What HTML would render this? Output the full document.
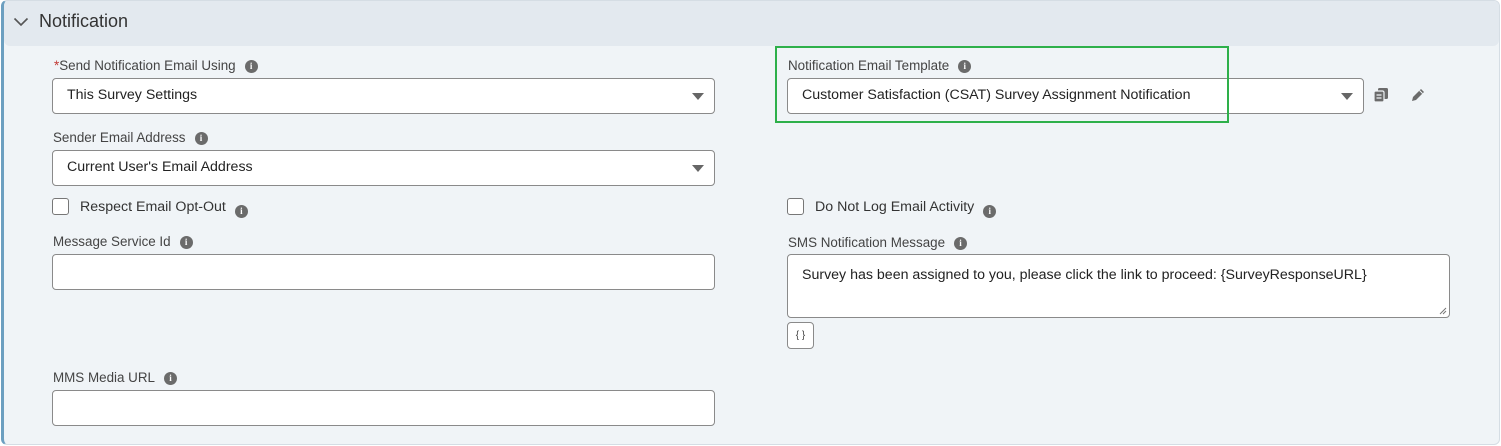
<!DOCTYPE html>
<html><head><style>
*{box-sizing:border-box;margin:0;padding:0}
body{width:1501px;height:446px;background:#fff;font-family:"Liberation Sans",sans-serif;position:relative;overflow:hidden;color:#3e3e3c}
.card{position:absolute;left:1px;top:0;width:1499px;height:445px;background:#f0f4f7;border:1px solid #d5dde4;border-left:3px solid #6c9fc0;border-radius:6px;overflow:hidden}
.hdr{position:absolute;left:0;top:0;right:0;height:45px;background:#e3e9ef;border-radius:0 0 6px 6px}
.abs{position:absolute}
.lbl{position:absolute;font-size:13.4px;color:#444;white-space:nowrap;line-height:16px}
.info{display:inline-block;width:13px;height:13px;border-radius:50%;background:#6b6b6b;color:#fff;font-size:9px;font-weight:bold;text-align:center;line-height:13px;vertical-align:1px;margin-left:9px;font-family:"Liberation Serif",serif}
.inp{position:absolute;background:#fff;border:1px solid #8a8a8a;border-radius:4px;font-size:14.2px;color:#222;padding-left:14px;line-height:33px;white-space:nowrap}
.arr{position:absolute;right:10px;top:14px;width:0;height:0;border-left:6px solid transparent;border-right:6px solid transparent;border-top:7px solid #666}
.cb{position:absolute;width:17px;height:17px;background:#fff;border:1px solid #777;border-radius:3px}
</style></head><body>
<div class="card">
<div class="hdr"></div>
</div>
<svg class="abs" style="left:13px;top:16px" width="16" height="12"><path d="M1.5 2.5 L8 9 L14.5 2.5" fill="none" stroke="#555" stroke-width="1.6"/></svg>
<div class="abs" style="left:39px;top:10px;font-size:18px;color:#333;line-height:22px">Notification</div>

<div class="lbl" style="left:54px;top:58px"><span style="color:#c23934">*</span>Send Notification Email Using<span class="info">i</span></div>
<div class="inp" style="left:52px;top:78px;width:663px;height:36px">This Survey Settings<div class="arr"></div></div>

<div class="lbl" style="left:53px;top:130px">Sender Email Address<span class="info">i</span></div>
<div class="inp" style="left:52px;top:150px;width:663px;height:36px">Current User's Email Address<div class="arr"></div></div>

<div class="cb" style="left:52px;top:198px"></div>
<div class="lbl" style="left:80px;top:199px;font-size:14.2px;color:#333">Respect Email Opt-Out<span class="info" style="vertical-align:-3px">i</span></div>

<div class="lbl" style="left:53px;top:234px">Message Service Id<span class="info">i</span></div>
<div class="inp" style="left:52px;top:254px;width:663px;height:36px"></div>

<div class="lbl" style="left:53px;top:370px">MMS Media URL<span class="info">i</span></div>
<div class="inp" style="left:52px;top:390px;width:663px;height:36px"></div>

<div class="lbl" style="left:788px;top:58px">Notification Email Template<span class="info">i</span></div>
<div class="inp" style="left:787px;top:78px;width:577px;height:36px">Customer Satisfaction (CSAT) Survey Assignment Notification<div class="arr"></div></div>
<div class="abs" style="left:775px;top:46px;width:454px;height:77px;border:2px solid #2eb04a"></div>

<svg class="abs" style="left:1373px;top:87px" width="16" height="16"><rect x="5" y="1" width="10" height="11" rx="1.5" fill="#6b6b6b"/><rect x="1" y="4" width="10" height="11" rx="1.5" fill="#6b6b6b" stroke="#f0f4f7" stroke-width="1.2"/><path d="M3.5 8h5M3.5 11h5" stroke="#f0f4f7" stroke-width="1.2"/></svg>
<svg class="abs" style="left:1410px;top:87px" width="16" height="16"><path d="M2 14 L3 10 L11 2 L14 5 L6 13 Z" fill="#6b6b6b"/><path d="M9.5 3.5 L12.5 6.5" stroke="#f0f4f7" stroke-width="1"/></svg>

<div class="cb" style="left:787px;top:198px"></div>
<div class="lbl" style="left:815px;top:199px;font-size:14.2px;color:#333">Do Not Log Email Activity<span class="info" style="vertical-align:-3px">i</span></div>

<div class="lbl" style="left:788px;top:235px">SMS Notification Message<span class="info">i</span></div>
<div class="inp" style="left:787px;top:254px;width:663px;height:64px;line-height:18px;padding-top:11px">Survey has been assigned to you, please click the link to proceed: {SurveyResponseURL}
<svg class="abs" style="right:2px;bottom:2px" width="8" height="8"><path d="M7 1L1 7M7 4L4 7" stroke="#777"/></svg></div>
<div class="abs" style="left:787px;top:322px;width:27px;height:27px;border:1px solid #8a8a8a;border-radius:4px;background:#fff;font-size:10px;text-align:center;line-height:25px;color:#444">{ }</div>
</body></html>
